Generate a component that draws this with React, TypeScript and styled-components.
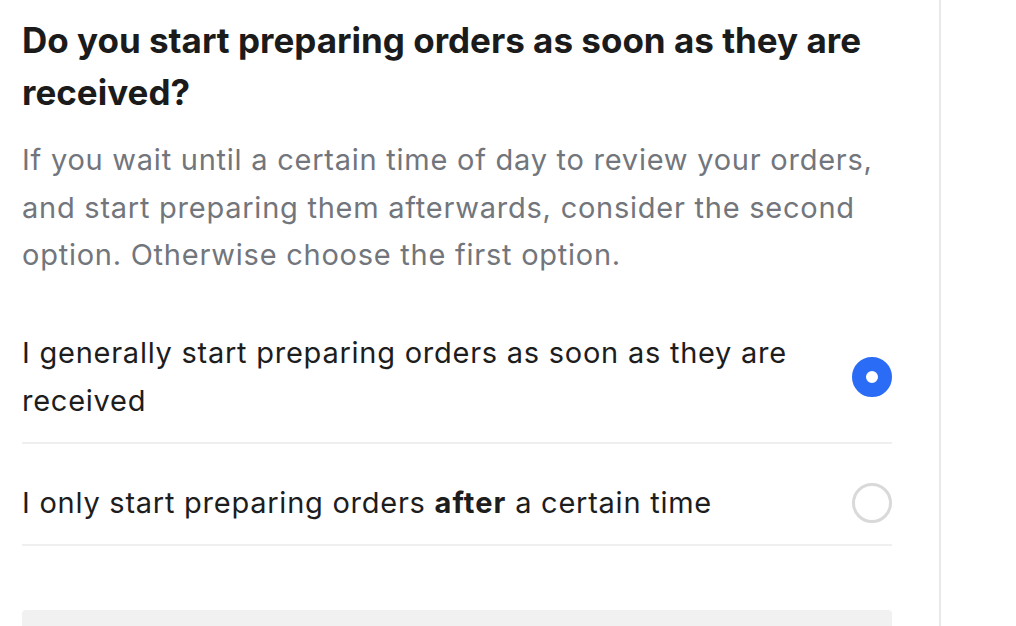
import React, { useState } from "react";
import styled, { createGlobalStyle } from "styled-components";

const GlobalStyle = createGlobalStyle`
  html, body {
    margin: 0;
    padding: 0;
    background: #ffffff;
  }
  body {
    font-family: Inter, "Noto Sans", sans-serif;
    -webkit-font-smoothing: antialiased;
  }
`;

type Option = {
  id: string;
  label: React.ReactNode;
};

const options: Option[] = [
  {
    id: "asap",
    label: "I generally start preparing orders as soon as they are received",
  },
  {
    id: "after",
    label: (
      <>
        I only start preparing orders <strong>after</strong> a certain time
      </>
    ),
  },
];

const App = () => {
  const [selected, setSelected] = useState("asap");

  return (
    <Page>
      <GlobalStyle />
      <Panel>
        <Content>
          <Title>Do you start preparing orders as soon as they are received?</Title>
          <Description>
            If you wait until a certain time of day to review your orders, and start preparing
            them afterwards, consider the second option. Otherwise choose the first option.
          </Description>
          <OptionList>
            {options.map((o) => (
              <OptionRow key={o.id} onClick={() => setSelected(o.id)}>
                <OptionLabel>{o.label}</OptionLabel>
                <Radio $checked={selected === o.id} />
              </OptionRow>
            ))}
          </OptionList>
          <Footer />
        </Content>
      </Panel>
      <Aside />
    </Page>
  );
};

const Page = styled.div`
  display: flex;
  height: 626px;
  overflow: hidden;
`;

const Panel = styled.div`
  width: 941px;
  flex-shrink: 0;
  border-right: 2px solid #e9e9e9;
  box-shadow: 2px 0 3px rgba(0, 0, 0, 0.03);
  box-sizing: border-box;
`;

const Content = styled.div`
  width: 870px;
  margin-left: 22px;
  padding-top: 14px;
  display: flex;
  flex-direction: column;
`;

const Title = styled.h1`
  margin: 0;
  font-size: 35px;
  line-height: 52px;
  font-weight: 700;
  color: #1b1b1b;
  padding-right: 10px;
`;

const Description = styled.p`
  margin: 18px 0 0;
  font-size: 29px;
  line-height: 47.5px;
  color: #72767c;
  font-weight: 400;
  letter-spacing: 0.75px;
`;

const OptionList = styled.div`
  display: flex;
  flex-direction: column;
  margin-top: 15px;
`;

const OptionRow = styled.label`
  display: flex;
  align-items: center;
  justify-content: space-between;
  gap: 40px;
  padding: 35px 0 17px;
  border-bottom: 2px solid #efefef;
  cursor: pointer;
`;

const OptionLabel = styled.span`
  font-size: 29px;
  line-height: 48px;
  letter-spacing: 0.75px;
  color: #1d1d1d;

  strong {
    font-weight: 700;
    letter-spacing: 1px;
  }
`;

const Radio = styled.span<{ $checked: boolean }>`
  width: 40px;
  height: 40px;
  flex-shrink: 0;
  border-radius: 50%;
  box-sizing: border-box;
  background: #ffffff;
  border: ${(p) => (p.$checked ? "14px solid #2b6cf6" : "3px solid #d9d9d9")};
`;

const Footer = styled.div`
  margin-top: 64px;
  height: 24px;
  border-radius: 4px;
  background: #f1f1f1;
`;

const Aside = styled.div`
  flex: 1;
  background: #ffffff;
`;

export default App;
